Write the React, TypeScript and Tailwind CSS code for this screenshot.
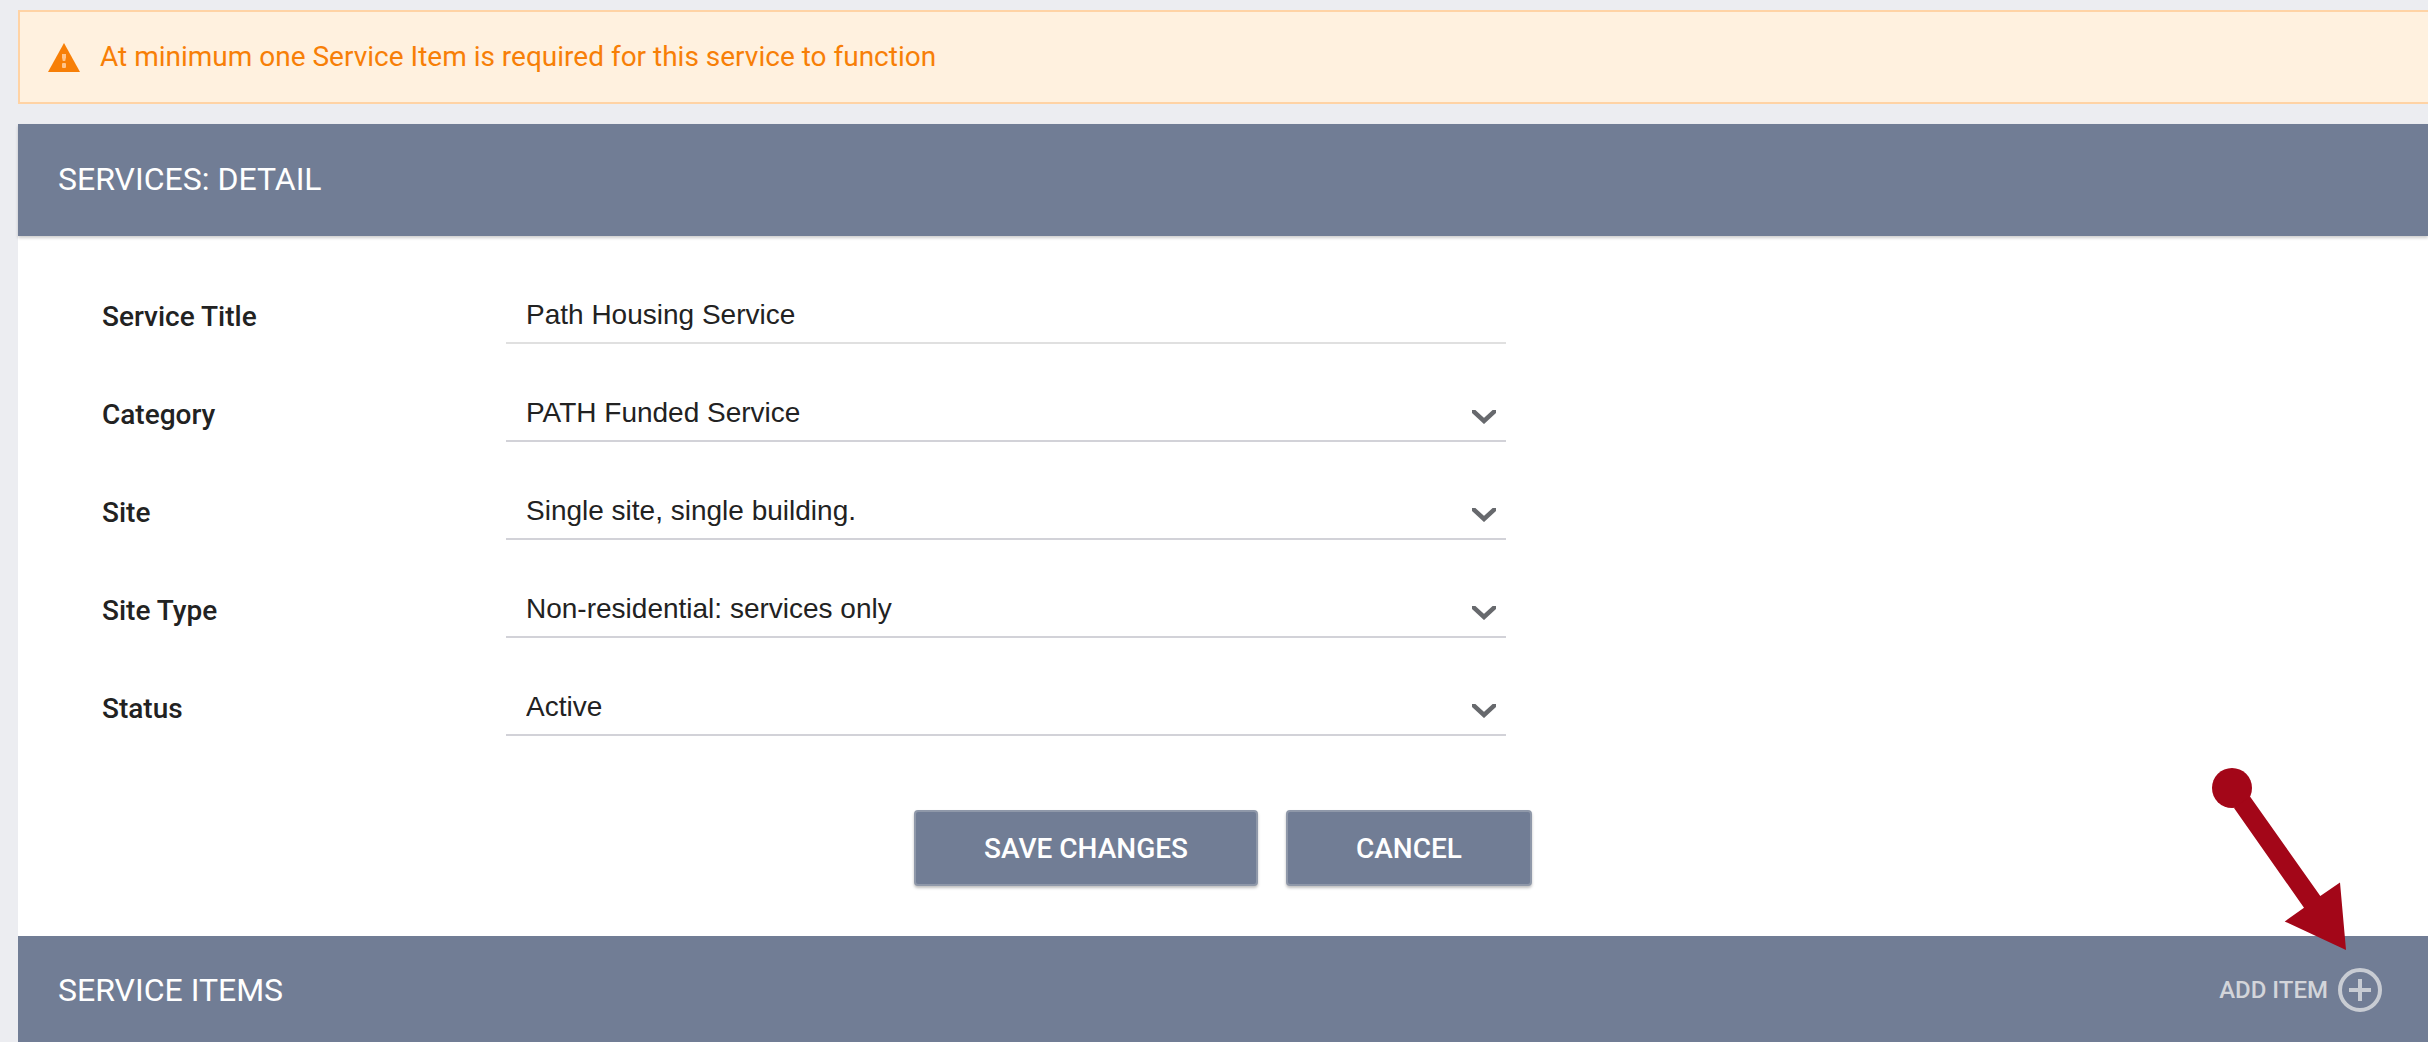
import React from "react";

const selects = [
  { id: "category", label: "Category", value: "PATH Funded Service" },
  { id: "site", label: "Site", value: "Single site, single building." },
  { id: "site-type", label: "Site Type", value: "Non-residential: services only" },
  { id: "status", label: "Status", value: "Active" },
];

const labelClass = "w-[404px] shrink-0 pt-1 text-[28px] font-medium text-[#222222]";

const fieldClass =
  "block h-[58px] w-full appearance-none rounded-none border-b-2 bg-transparent pt-[2px] pl-5 font-['Liberation_Sans',Arial,sans-serif] text-[28px] text-[#222222] outline-none";

const buttonClass =
  "h-[76px] rounded-sm border-2 border-[#8f98a9] bg-[#717d95] px-[68px] pt-[2px] text-[28px] font-medium text-white shadow-[0_2px_3px_rgba(0,0,0,0.25)]";

const WarningIcon = () => (
  <svg width="32" height="30" viewBox="0 0 32 30" className="shrink-0" aria-hidden="true">
    <path d="M16 1L32 30H0Z" fill="#f77f07" />
    <path d="M14 12h4v3.500l-.8 3.500h-2.400l-.8-3.500z" fill="#ffc48a" />
    <rect x="14" y="21" width="4" height="5" rx="1" fill="#ffc48a" />
  </svg>
);

const Chevron = () => (
  <svg
    width="24"
    height="14"
    viewBox="0 0 24 14"
    className="pointer-events-none absolute right-[10px] bottom-[18px]"
    aria-hidden="true"
  >
    <path d="M-1 -1L12 11L25 -1" fill="none" stroke="#67696d" strokeWidth="4.500" />
  </svg>
);

const PlusCircle = () => (
  <svg width="44" height="44" viewBox="0 0 44 44" fill="none" stroke="#c8ccd3" aria-hidden="true">
    <circle cx="22" cy="22" r="20" strokeWidth="4" />
    <path d="M22 11v22M11 22h22" strokeWidth="4" />
  </svg>
);

const Pointer = () => (
  <svg
    width="134"
    height="182"
    viewBox="0 0 134 182"
    className="pointer-events-none absolute -top-[168px] right-[82px]"
    fill="#a30618"
    aria-hidden="true"
  >
    <circle cx="20" cy="20" r="20" />
    <path d="M38 28.500L108.300 128L128 114.500L134 182L72.700 153.500L92 139.700L22 40Z" />
  </svg>
);

const App = () => {
  return (
    <div className="h-screen overflow-hidden bg-[#ecedf1] pt-[10px] pl-[18px] font-[Roboto,sans-serif]">
      <div
        role="alert"
        className="flex h-[94px] items-center gap-5 border-2 border-r-0 border-[#ffd3a5] bg-[#fff1df] pl-7 text-[28px] text-[#f77f07]"
      >
        <WarningIcon />
        <p>At minimum one Service Item is required for this service to function</p>
      </div>

      <main className="mt-5 bg-white">
        <header className="flex h-28 items-center bg-[#717d95] pb-[2px] pl-10 text-white shadow-[0_2px_3px_rgba(0,0,0,0.2)]">
          <h1 className="text-[32px]">SERVICES: DETAIL</h1>
        </header>

        <form className="pt-[50px] pb-[50px] pl-[84px]" onSubmit={(e) => e.preventDefault()}>
          <div className="flex max-w-[1404px] flex-col gap-10">
            <div className="flex items-center">
              <label htmlFor="title" className={labelClass}>
                Service Title
              </label>
              <div className="flex-1">
                <input
                  id="title"
                  type="text"
                  defaultValue="Path Housing Service"
                  className={`${fieldClass} border-[#e0e0e0]`}
                />
              </div>
            </div>
            {selects.map((field) => (
              <div key={field.id} className="flex items-center">
                <label htmlFor={field.id} className={labelClass}>
                  {field.label}
                </label>
                <div className="relative flex-1">
                  <select id={field.id} className={`${fieldClass} border-[#d2d2d8]`}>
                    <option>{field.value}</option>
                  </select>
                  <Chevron />
                </div>
              </div>
            ))}
          </div>

          <div className="-ml-[84px] flex justify-center gap-7 pt-[74px]">
            <button type="submit" className={buttonClass}>
              SAVE CHANGES
            </button>
            <button type="button" className={buttonClass}>
              CANCEL
            </button>
          </div>
        </form>

        <section>
          <header className="relative flex h-[110px] items-center justify-between bg-[#717d95] pr-[46px] pb-[2px] pl-10 text-white">
            <h2 className="text-[32px]">SERVICE ITEMS</h2>
            <button type="button" className="flex items-center gap-[10px] text-[24px] font-medium text-[#d3d5da]">
              ADD ITEM
              <PlusCircle />
            </button>
            <Pointer />
          </header>
        </section>
      </main>
    </div>
  );
};

export default App;
